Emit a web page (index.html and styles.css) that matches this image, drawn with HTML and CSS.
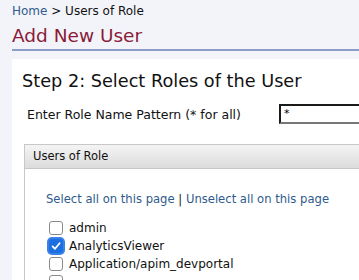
FILE: index.html
```
<!DOCTYPE html>
<html>
<head>
<meta charset="utf-8">
<link rel="stylesheet" href="styles.css">
</head>
<body>
<div class="page">
  <div class="crumbs"><a class="link" href="#">Home</a> &gt; Users of Role</div>
  <h1 class="title">Add New User</h1>
  <div class="panel">
    <h2 class="step">Step 2: Select Roles of the User</h2>
    <div class="pattern">
      <span class="plabel">Enter Role Name Pattern (* for all)</span>
      <span class="pinput">*</span>
    </div>
    <div class="box">
      <div class="boxhead">Users of Role</div>
      <div class="boxbody">
        <div class="selects"><a class="link" href="#">Select all on this page</a> | <a class="link" href="#">Unselect all on this page</a></div>
        <div class="row"><span class="cb"></span><span class="lbl">admin</span></div>
        <div class="row"><span class="cb on"><svg viewBox="0 0 14 14" width="14" height="14"><path d="M3.6 7.4 L6 9.8 L10.6 4.2" fill="none" stroke="#fff" stroke-width="1.8" stroke-linecap="round" stroke-linejoin="round"/></svg></span><span class="lbl">AnalyticsViewer</span></div>
        <div class="row"><span class="cb"></span><span class="lbl">Application/apim_devportal</span></div>
        <div class="row"><span class="cb"></span></div>
      </div>
    </div>
  </div>
</div>
</body>
</html>
```
FILE: styles.css
```
html, body {
  margin: 0;
  padding: 0;
  background: #f3f4f9;
  overflow: hidden;
  height: 280px;
}
body {
  font-family: "DejaVu Sans", sans-serif;
  color: #111;
}
.page {
  padding: 4px 0 0 12px;
}
.link {
  color: #2f5b8c;
  text-decoration: none;
}
.crumbs {
  font-size: 12px;
  line-height: 14px;
  height: 14px;
}
.title {
  margin: 5px 0 0 0;
  font-weight: normal;
  font-size: 18.5px;
  line-height: 26px;
  color: #8a1b38;
  border-bottom: 2px solid #8d9ec6;
  padding-bottom: 0;
}
.panel {
  margin-top: 8px;
  background: #fff;
  padding: 11px 0 0 10px;
  height: 400px;
}
.step {
  margin: 0;
  font-weight: normal;
  font-size: 17.7px;
  line-height: 22px;
}
.pattern {
  display: flex;
  align-items: center;
  margin: 12px 0 0 5px;
}
.plabel {
  font-size: 12.5px;
  width: 252px;
  flex-shrink: 0;
}
.pinput {
  display: block;
  flex-shrink: 0;
  width: 90px;
  height: 16px;
  font-size: 11px;
  line-height: 16px;
  padding-left: 3px;
  color: #000;
  border-top: 2px solid #1a1a1a;
  border-left: 2px solid #1a1a1a;
  border-bottom: 2px solid #777;
  background: #fff;
}
.box {
  margin: 20px 0 0 2px;
  border: 1px solid #c8c8c8;
  border-right: none;
}
.boxhead {
  height: 23px;
  line-height: 22px;
  font-size: 11.5px;
  padding-left: 8px;
  background: linear-gradient(#f4f4f4, #dcdcdc);
  border-bottom: 1px solid #c6c6c6;
}
.boxbody {
  padding: 22px 0 0 21px;
}
.selects {
  font-size: 11.6px;
  line-height: 16px;
  color: #222;
  margin-bottom: 12px;
}
.row {
  display: flex;
  align-items: center;
  height: 18px;
  padding-left: 3px;
}
.cb {
  box-sizing: border-box;
  width: 14px;
  height: 14px;
  border: 1px solid #8a8a8a;
  border-radius: 3px;
  background: #fff;
  margin-right: 6px;
  display: flex;
}
.cb.on {
  background: #1b6fe0;
  box-shadow: 0 0 0 2px #3b7fe8;
  border: none;
}
.lbl {
  font-size: 12px;
}
```
